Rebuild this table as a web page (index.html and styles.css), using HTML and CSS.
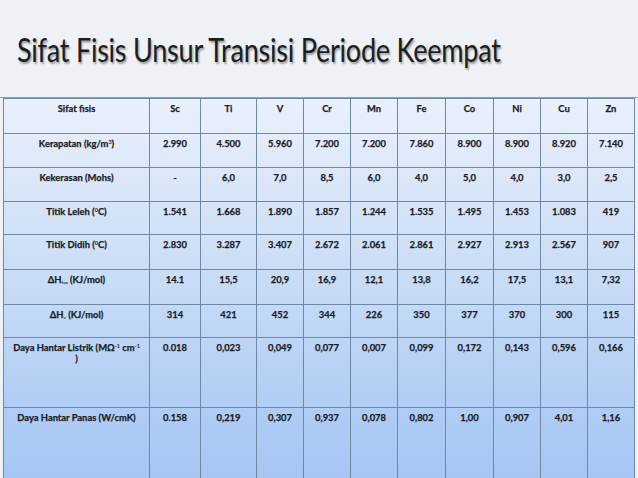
FILE: index.html
```html
<!DOCTYPE html>
<html>
<head>
<meta charset="utf-8">
<link rel="stylesheet" href="styles.css">
</head>
<body>
<div class="slide">
  <div class="head"><h1 class="title">Sifat Fisis Unsur Transisi Periode Keempat</h1></div>
  <table class="data">
    <colgroup>
      <col class="c0"><col class="c1"><col class="c2"><col class="c3"><col class="c4"><col class="c5"><col class="c6"><col class="c7"><col class="c8"><col class="c9"><col class="c10">
    </colgroup>
    <tr class="r1"><td>Sifat fisis</td><td>Sc</td><td>Ti</td><td>V</td><td>Cr</td><td>Mn</td><td>Fe</td><td>Co</td><td>Ni</td><td>Cu</td><td>Zn</td></tr>
    <tr class="r2"><td>Kerapatan (kg/m<sup>3</sup>)</td><td>2.990</td><td>4.500</td><td>5.960</td><td>7.200</td><td>7.200</td><td>7.860</td><td>8.900</td><td>8.900</td><td>8.920</td><td>7.140</td></tr>
    <tr class="r3"><td>Kekerasan (Mohs)</td><td>-</td><td>6,0</td><td>7,0</td><td>8,5</td><td>6,0</td><td>4,0</td><td>5,0</td><td>4,0</td><td>3,0</td><td>2,5</td></tr>
    <tr class="r4"><td>Titik Leleh (<sup>0</sup>C)</td><td>1.541</td><td>1.668</td><td>1.890</td><td>1.857</td><td>1.244</td><td>1.535</td><td>1.495</td><td>1.453</td><td>1.083</td><td>419</td></tr>
    <tr class="r5"><td>Titik Didih (<sup>0</sup>C)</td><td>2.830</td><td>3.287</td><td>3.407</td><td>2.672</td><td>2.061</td><td>2.861</td><td>2.927</td><td>2.913</td><td>2.567</td><td>907</td></tr>
    <tr class="r6"><td>ΔH<sub>fus</sub> (KJ/mol)</td><td>14.1</td><td>15,5</td><td>20,9</td><td>16,9</td><td>12,1</td><td>13,8</td><td>16,2</td><td>17,5</td><td>13,1</td><td>7,32</td></tr>
    <tr class="r7"><td>ΔH<sub>v</sub> (KJ/mol)</td><td>314</td><td>421</td><td>452</td><td>344</td><td>226</td><td>350</td><td>377</td><td>370</td><td>300</td><td>115</td></tr>
    <tr class="r8"><td>Daya Hantar Listrik (MΩ<sup>-1</sup> cm<sup>-1</sup><br>)</td><td>0.018</td><td>0,023</td><td>0,049</td><td>0,077</td><td>0,007</td><td>0,099</td><td>0,172</td><td>0,143</td><td>0,596</td><td>0,166</td></tr>
    <tr class="r9"><td>Daya Hantar Panas (W/cmK)</td><td>0.158</td><td>0,219</td><td>0,307</td><td>0,937</td><td>0,078</td><td>0,802</td><td>1,00</td><td>0,907</td><td>4,01</td><td>1,16</td></tr>
  </table>
</div>
</body>
</html>
```
FILE: styles.css
```css
html, body {
  margin: 0;
  padding: 0;
  background: #eef2f6;
  overflow: hidden;
}
.slide {
  width: 638px;
  height: 478px;
  overflow: hidden;
  background: #eef2f6;
}
.head {
  height: 98px;
  box-sizing: border-box;
  padding: 29px 0 0 17px;
  overflow: hidden;
  border-bottom: 1px solid #8ea3ba;
}
.title {
  margin: 0;
  display: inline-block;
  font-family: "Lato", sans-serif;
  font-weight: 400;
  font-size: 33px;
  line-height: 40px;
  letter-spacing: -0.3px;
  color: #1e1e1e;
  text-shadow: 1.5px 1.5px 2px rgba(0,0,0,0.35);
  white-space: nowrap;
  transform: scaleX(0.82);
  transform-origin: left center;
}
.data {
  margin-left: 3px;
  border-collapse: collapse;
  table-layout: fixed;
  width: 631px;
  background: linear-gradient(to bottom, #e9f0fb 0%, #c9dcf6 45%, #aac9f4 85%, #a6c5f3 100%);
  border: 1.5px solid #7b93ad;
  font-family: "Lato", "Liberation Sans", sans-serif;
  font-weight: 700;
  font-size: 9.4px;
  color: #1a1d27;
  -webkit-text-stroke: 0.25px #1a1d27;
}
.data td {
  border: 1px solid #6f88a6;
  text-align: center;
  vertical-align: top;
  padding: 4px 2px 0 2px;
  line-height: 11px;
  overflow: hidden;
}
.c0 { width: 146px; }
.c1 { width: 51px; }
.c2 { width: 56px; }
.c3 { width: 47px; }
.c4 { width: 47px; }
.c5 { width: 47px; }
.c6 { width: 48px; }
.c7 { width: 48px; }
.c8 { width: 47px; }
.c9 { width: 47px; }
.c10 { width: 47px; }
.r1 { height: 35px; }
.r2 { height: 34px; }
.r3 { height: 34px; }
.r4 { height: 33px; }
.r5 { height: 35px; }
.r6 { height: 35px; }
.r7 { height: 33px; }
.r8 { height: 70px; }
.r9 { height: 91px; }
.data sup {
  font-size: 5.5px;
  vertical-align: 3px;
  line-height: 0;
  -webkit-text-stroke: 0;
}
.data sub {
  font-size: 4.5px;
  vertical-align: -1px;
  line-height: 0;
  -webkit-text-stroke: 0;
}
```
